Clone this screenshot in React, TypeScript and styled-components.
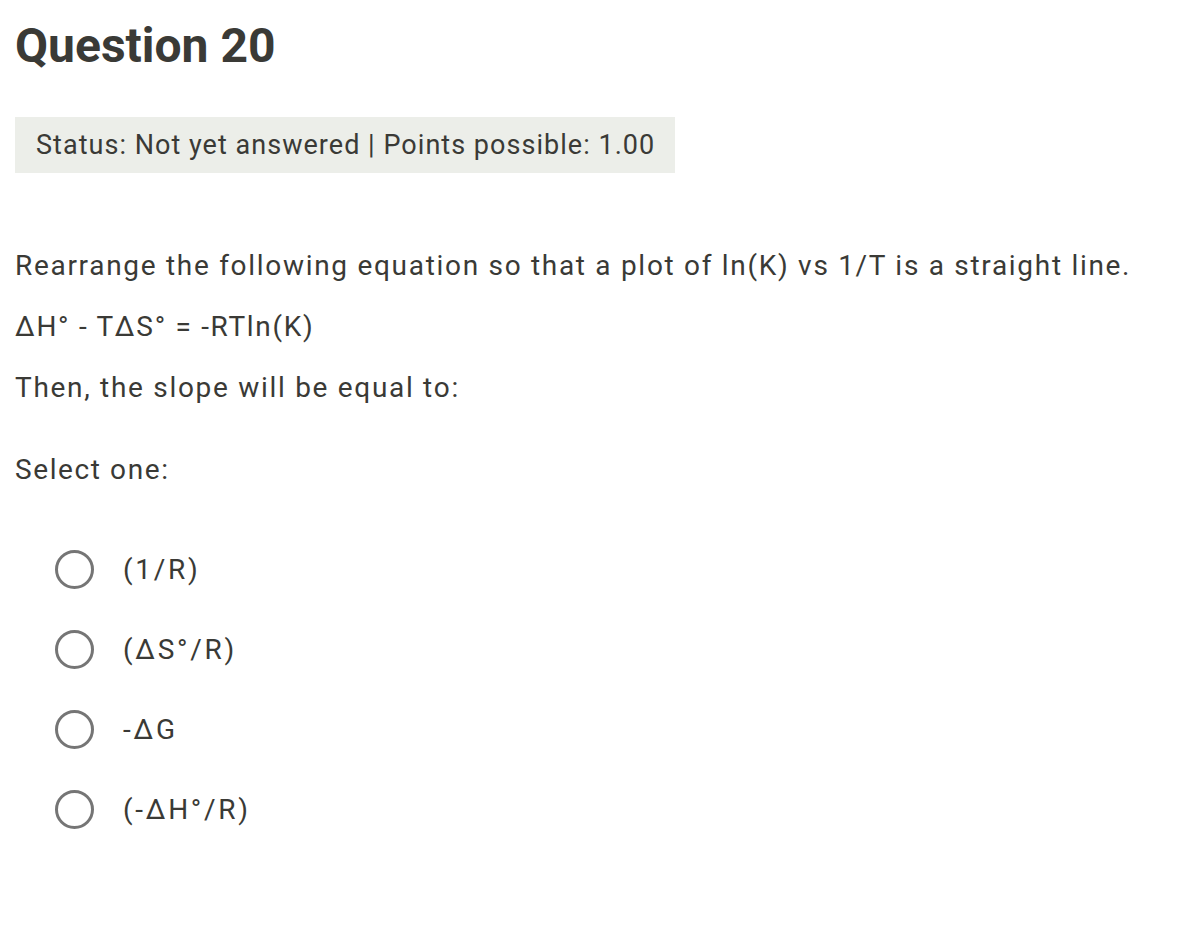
import React from "react";
import styled, { createGlobalStyle } from "styled-components";

const GlobalStyle = createGlobalStyle`
  html, body {
    margin: 0;
    padding: 0;
    background: #ffffff;
  }
  body {
    font-family: Roboto, "Liberation Sans", sans-serif;
    color: #3a3a36;
  }
`;

const Page = styled.div`
  padding: 14px 16px 0 15px;
`;

const Title = styled.h1`
  margin: 0;
  font-size: 48px;
  font-weight: 700;
  line-height: 64px;
  color: #3a3a36;
`;

const StatusBox = styled.div`
  display: inline-block;
  margin-top: 39px;
  padding: 0 20px 0 21px;
  height: 56px;
  line-height: 57px;
  background: #eceee9;
  font-size: 27px;
  letter-spacing: 1.03px;
`;

const Body = styled.div`
  margin-top: 62px;
  font-size: 28px;
  letter-spacing: 1.7px;
`;

const Line = styled.p`
  margin: 0;
  line-height: 61px;
  white-space: nowrap;
`;

const Prompt = styled.p`
  margin: 22px 0 0;
  line-height: 60px;
  font-size: 28px;
  letter-spacing: 1.6px;
`;

const Options = styled.div`
  margin-top: 29px;
  padding-left: 40px;
  display: flex;
  flex-direction: column;
`;

const Option = styled.label`
  display: flex;
  align-items: center;
  height: 80px;
  gap: 29px;
  font-size: 28px;
  letter-spacing: 2.7px;
  cursor: pointer;
`;

const Radio = styled.span`
  box-sizing: border-box;
  width: 39px;
  height: 39px;
  border: 3px solid #757575;
  border-radius: 50%;
  flex: none;
`;

const choices = ["(1/R)", "(ΔS°/R)", "-ΔG", "(-ΔH°/R)"];

export default function App() {
  return (
    <>
      <GlobalStyle />
      <Page>
        <Title>Question 20</Title>
        <StatusBox>Status: Not yet answered | Points possible: 1.00</StatusBox>
        <Body>
          <Line>Rearrange the following equation so that a plot of ln(K) vs 1/T is a straight line.</Line>
          <Line>ΔH° - TΔS° = -RTln(K)</Line>
          <Line>Then, the slope will be equal to:</Line>
        </Body>
        <Prompt>Select one:</Prompt>
        <Options>
          {choices.map((c) => (
            <Option key={c}>
              <Radio />
              <span>{c}</span>
            </Option>
          ))}
        </Options>
      </Page>
    </>
  );
}
